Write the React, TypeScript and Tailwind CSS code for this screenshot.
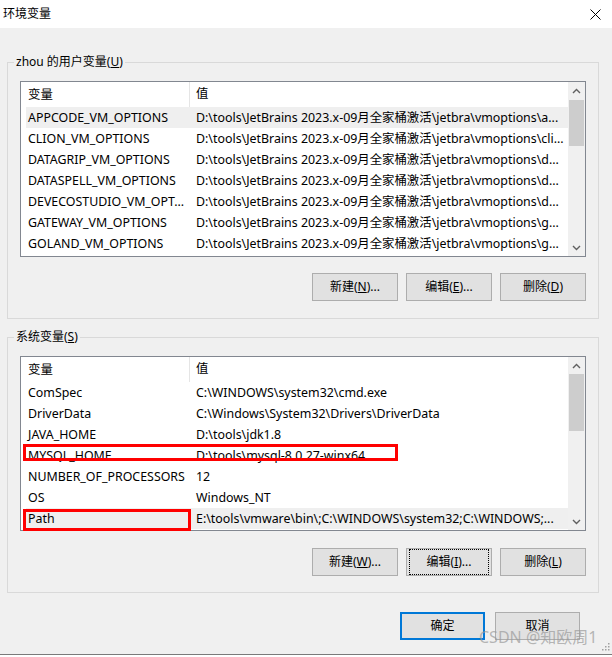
import { ReactNode } from "react";

const userVars: [string, string][] = [
  ["APPCODE_VM_OPTIONS", "D:\\tools\\JetBrains 2023.x-09月全家桶激活\\jetbra\\vmoptions\\a..."],
  ["CLION_VM_OPTIONS", "D:\\tools\\JetBrains 2023.x-09月全家桶激活\\jetbra\\vmoptions\\cli..."],
  ["DATAGRIP_VM_OPTIONS", "D:\\tools\\JetBrains 2023.x-09月全家桶激活\\jetbra\\vmoptions\\d..."],
  ["DATASPELL_VM_OPTIONS", "D:\\tools\\JetBrains 2023.x-09月全家桶激活\\jetbra\\vmoptions\\d..."],
  ["DEVECOSTUDIO_VM_OPT...", "D:\\tools\\JetBrains 2023.x-09月全家桶激活\\jetbra\\vmoptions\\d..."],
  ["GATEWAY_VM_OPTIONS", "D:\\tools\\JetBrains 2023.x-09月全家桶激活\\jetbra\\vmoptions\\g..."],
  ["GOLAND_VM_OPTIONS", "D:\\tools\\JetBrains 2023.x-09月全家桶激活\\jetbra\\vmoptions\\g..."],
];

const sysVars: [string, string][] = [
  ["ComSpec", "C:\\WINDOWS\\system32\\cmd.exe"],
  ["DriverData", "C:\\Windows\\System32\\Drivers\\DriverData"],
  ["JAVA_HOME", "D:\\tools\\jdk1.8"],
  ["MYSQL_HOME", "D:\\tools\\mysql-8.0.27-winx64"],
  ["NUMBER_OF_PROCESSORS", "12"],
  ["OS", "Windows_NT"],
  ["Path", "E:\\tools\\vmware\\bin\\;C:\\WINDOWS\\system32;C:\\WINDOWS;..."],
];

const Chevron = ({ down }: { down?: boolean }) => (
  <svg width="9" height="6" viewBox="0 0 9 6">
    <polyline
      points={down ? "1,1 4.5,4.5 8,1" : "1,5 4.5,1.5 8,5"}
      fill="none"
      stroke="#606060"
      strokeWidth="1.4"
    />
  </svg>
);

const ListView = ({
  rows,
  selected,
  height,
  thumbTop,
  thumbHeight,
}: {
  rows: [string, string][];
  selected: number;
  height: string;
  thumbTop: string;
  thumbHeight: string;
}) => (
  <div className={`flex w-full overflow-hidden border border-[#828790] bg-white text-[12.4px] ${height}`}>
    <div className="flex min-w-0 flex-1 flex-col">
      <div className="flex h-[25px] shrink-0 items-center">
        <div className="h-full w-[169px] border-r border-[#e5e5e5] pl-[7px] leading-[25px]">变量</div>
        <div className="pl-[6px]">值</div>
      </div>
      {rows.map(([name, value], i) => (
        <div
          key={name}
          className={`ml-[5px] flex h-[21px] shrink-0 items-center leading-[21px] ${
            i === selected ? "bg-[#efefef]" : ""
          }`}
        >
          <div className="w-[164px] truncate pl-[2px]">{name}</div>
          <div className="min-w-0 flex-1 truncate pl-[6px]">{value}</div>
        </div>
      ))}
    </div>
    <div className="flex w-[17px] shrink-0 flex-col bg-[#f0f0f0]">
      <div className="flex h-[17px] items-center justify-center">
        <Chevron />
      </div>
      <div className="relative flex-1">
        <div className={`absolute left-[1px] right-[1px] bg-[#cdcdcd] ${thumbTop} ${thumbHeight}`} />
      </div>
      <div className="flex h-[17px] items-center justify-center">
        <Chevron down />
      </div>
    </div>
  </div>
);

const Button = ({
  children,
  focused,
  primary,
  width = "w-[86px]",
}: {
  children: ReactNode;
  focused?: boolean;
  primary?: boolean;
  width?: string;
}) => (
  <button
    type="button"
    className={`flex h-[28px] items-center justify-center bg-[#e1e1e1] ${width} ${
      primary ? "border-2 border-[#0078d7]" : "border border-[#adadad]"
    }`}
  >
    <span
      className={`flex h-full w-full items-center justify-center ${
        focused ? "m-[2px] border border-dotted border-black" : ""
      }`}
    >
      {children}
    </span>
  </button>
);

const GroupBox = ({ title, children }: { title: ReactNode; children: ReactNode }) => (
  <fieldset className="border border-[#d9d9d9] px-[12px]">
    <legend className="ml-[-6px] px-[2px] leading-[16px]">{title}</legend>
    {children}
  </fieldset>
);

export default function App() {
  return (
    <div className="relative flex h-[657px] w-[612px] flex-col overflow-hidden bg-[#f0f0f0] font-['Noto_Sans','Noto_Sans_CJK_SC',sans-serif] text-[12px] text-black">
      {/* title bar */}
      <div className="flex h-[28px] shrink-0 items-center justify-between bg-white pl-[3px] pr-[11px]">
        <span className="leading-[16px]">环境变量</span>
        <svg width="11" height="11" viewBox="0 0 11 11">
          <path d="M0.5 0.5 L10.5 10.5 M10.5 0.5 L0.5 10.5" stroke="#000" strokeWidth="1" />
        </svg>
      </div>

      <div className="flex flex-col px-[7px] pr-[13px] pt-[26px]">
        <GroupBox
          title={
            <>
              zhou 的用户变量(<u>U</u>)
            </>
          }
        >
          <div className="mt-[11px]">
            <ListView rows={userVars} selected={0} height="h-[176px]" thumbTop="top-[1px]" thumbHeight="h-[46px]" />
          </div>
          <div className="mt-[16px] mb-[17px] flex justify-end gap-2">
            <Button>
              新建(<u>N</u>)...
            </Button>
            <Button>
              编辑(<u>E</u>)...
            </Button>
            <Button>
              删除(<u>D</u>)
            </Button>
          </div>
        </GroupBox>

        <div className="mt-[10px]">
          <GroupBox
            title={
              <>
                系统变量(<u>S</u>)
              </>
            }
          >
            <div className="relative mt-[11px]">
              <ListView rows={sysVars} selected={6} height="h-[175px]" thumbTop="top-[0px]" thumbHeight="h-[57px]" />
              <div className="absolute left-[3px] top-[88px] h-[17px] w-[375px] border-[3px] border-[#ff0000]" />
              <div className="absolute left-[3px] top-[153px] h-[22px] w-[168px] border-[3px] border-[#ff0000]" />
            </div>
            <div className="mt-[17px] mb-[16px] flex justify-end gap-2">
              <Button>
                新建(<u>W</u>)...
              </Button>
              <Button focused>
                编辑(<u>I</u>)...
              </Button>
              <Button>
                删除(<u>L</u>)
              </Button>
            </div>
          </GroupBox>
        </div>

        <div className="mt-[19px] flex justify-end gap-[10px] pr-[19px]">
          <Button primary width="w-[85px]">
            确定
          </Button>
          <Button width="w-[85px]">取消</Button>
        </div>
      </div>

      <div className="mt-auto h-[1px] shrink-0 bg-[#7a7a7a]" />
      <div className="h-[2px] shrink-0 bg-white" />

      {/* resize grip */}
      <svg className="absolute bottom-[4px] right-[2px]" width="10" height="10" viewBox="0 0 10 10">
        <rect x="8" y="0" width="1.5" height="1.5" fill="#a0a0a0" />
        <rect x="5" y="3" width="1.5" height="1.5" fill="#a0a0a0" />
        <rect x="8" y="3" width="1.5" height="1.5" fill="#a0a0a0" />
        <rect x="2" y="6" width="1.5" height="1.5" fill="#a0a0a0" />
        <rect x="5" y="6" width="1.5" height="1.5" fill="#a0a0a0" />
        <rect x="8" y="6" width="1.5" height="1.5" fill="#a0a0a0" />
      </svg>

      {/* watermark */}
      <div className="absolute left-[479px] top-[627px] text-[16px] leading-[20px] text-[#9a9a9a]/70">
        CSDN @知欧周1
      </div>
    </div>
  );
}
